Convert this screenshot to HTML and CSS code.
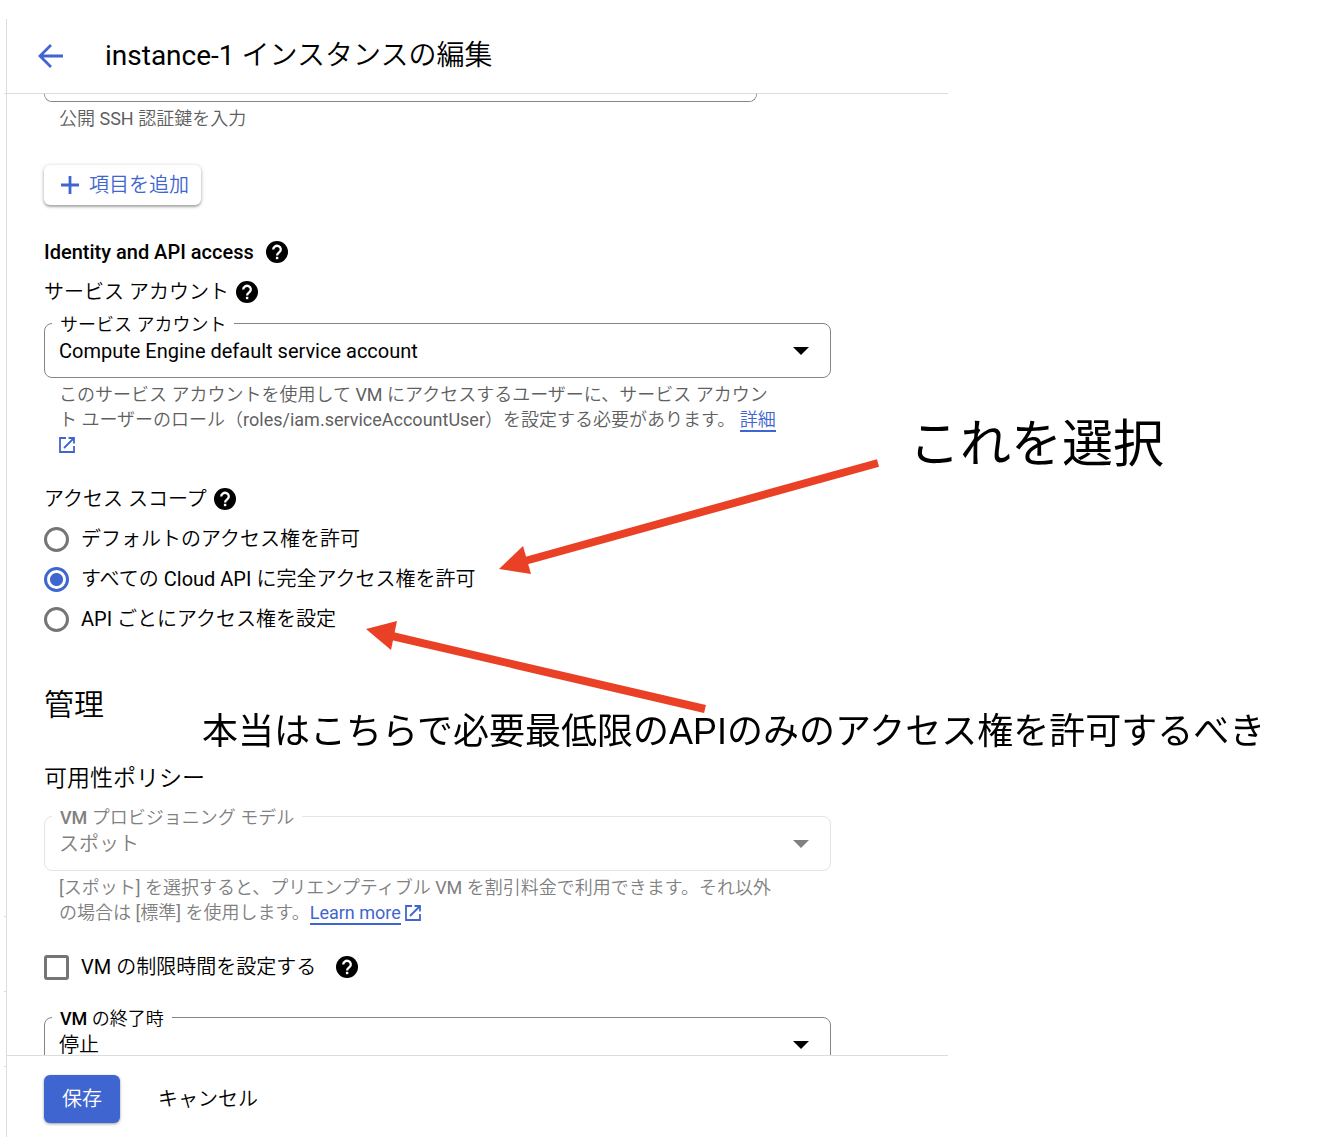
FILE: index.html
```html
<!DOCTYPE html>
<html lang="ja">
<head>
<meta charset="utf-8">
<title>instance-1 インスタンスの編集</title>
<link rel="stylesheet" href="styles.css">
</head>
<body>
<svg class="sprite" aria-hidden="true">
  <symbol id="help" viewBox="0 0 22 22"><circle cx="11" cy="11" r="11" fill="#000"/><path d="M7.200 8.500a3.800 3.600 0 1 1 6.200 2.700c-1.400 1.100-2.300 1.500-2.300 3.200" fill="none" stroke="#fff" stroke-width="2.300"/><rect x="9.900" y="15.800" width="2.400" height="2.400" fill="#fff"/></symbol>
  <symbol id="open" viewBox="0 0 16 16"><path d="M7 1H1v14h14V9M9.500 1H15v5.500M15 1 5 11" fill="none" stroke="currentColor" stroke-width="1.800"/></symbol>
  <symbol id="caret" viewBox="0 0 16 8"><path d="M0 0h16L8 8z" fill="currentColor"/></symbol>
</svg>
<div class="app">
  <main class="panel">
    <header class="topbar">
      <button class="back" type="button" aria-label="戻る"><svg width="26" height="26" viewBox="0 0 26 26"><path d="M26 13H3M14 2 3 13l11 11" fill="none" stroke="currentColor" stroke-width="2.800"/></svg></button>
      <h1>instance-1 インスタンスの編集</h1>
    </header>
    <form class="content">
      <textarea class="key" aria-label="SSH 認証鍵" aria-describedby="key-hint"></textarea>
      <p class="hint" id="key-hint">公開 SSH 認証鍵を入力</p>
      <button class="add" type="button"><svg width="20" height="20" viewBox="0 0 20 20"><path d="M10 1v18M1 10h18" fill="none" stroke="currentColor" stroke-width="2.800"/></svg>項目を追加</button>

      <h4 class="row identity">Identity and API access <svg class="help"><use href="#help"/></svg></h4>
      <div class="row caption">サービス アカウント <svg class="help"><use href="#help"/></svg></div>
      <div class="field account">
        <label for="account">サービス アカウント</label>
        <select id="account"><option>Compute Engine default service account</option></select>
        <svg class="caret"><use href="#caret"/></svg>
      </div>
      <p class="hint">このサービス アカウントを使用して VM にアクセスするユーザーに、サービス アカウン<br>ト ユーザーのロール（roles/iam.serviceAccountUser）を設定する必要があります。 <a href="#">詳細</a><br><svg class="open"><use href="#open"/></svg></p>

      <div class="row caption scope" id="scope">アクセス スコープ <svg class="help"><use href="#help"/></svg></div>
      <div role="radiogroup" aria-labelledby="scope">
        <label class="row choice"><input type="radio" name="scope">デフォルトのアクセス権を許可</label>
        <label class="row choice"><input type="radio" name="scope" checked>すべての Cloud API に完全アクセス権を許可</label>
        <label class="row choice"><input type="radio" name="scope">API ごとにアクセス権を設定</label>
      </div>

      <h2>管理</h2>
      <h3>可用性ポリシー</h3>
      <div class="field disabled model">
        <label for="model"><b>VM</b> プロビジョニング モデル</label>
        <select id="model" disabled><option>スポット</option></select>
        <svg class="caret"><use href="#caret"/></svg>
      </div>
      <p class="hint muted">[スポット] を選択すると、プリエンプティブル VM を割引料金で利用できます。それ以外<br>の場合は [標準] を使用します。<a href="#">Learn more</a> <svg class="open"><use href="#open"/></svg></p>

      <div class="row limit">
        <label class="row choice"><input type="checkbox">VM の制限時間を設定する</label>
        <svg class="help"><use href="#help"/></svg>
      </div>
      <div class="field ending">
        <label for="ending"><b>VM</b> の終了時</label>
        <select id="ending"><option>停止</option></select>
        <svg class="caret"><use href="#caret"/></svg>
      </div>
    </form>
    <footer class="actions">
      <button class="save" type="button">保存</button>
      <button class="cancel" type="button">キャンセル</button>
    </footer>
  </main>
</div>

<svg class="arrows" width="900" height="720" viewBox="0 0 900 720" aria-hidden="true">
  <g stroke="#ea4025" stroke-width="8" fill="#ea4025">
    <path d="M878 463 525 561"/><path d="M499 569 523 546 531 574z" stroke="none"/>
    <path d="M705 709 392 636"/><path d="M366 629 397 621 391 650z" stroke="none"/>
  </g>
</svg>
<p class="note note-pick">これを選択</p>
<p class="note note-ideal">本当はこちらで必要最低限のAPIのみのアクセス権を許可するべき</p>
</body>
</html>
```
FILE: styles.css
```css
* { box-sizing: border-box; }

body {
  margin: 0;
  background: #fff;
  color: #000;
  font: 400 20px/40px Roboto, "Noto Sans CJK JP DemiLight", "Noto Sans CJK JP Light", "Noto Sans CJK JP", sans-serif;
}

h1, h2, h3, h4, p { margin: 0; font-weight: 400; }
button, select, input, textarea { font: inherit; color: inherit; margin: 0; }
svg { flex: none; }
a { color: #3f66d0; text-decoration: none; border-bottom: 2px solid #3f66d0; }

.sprite { position: absolute; width: 0; height: 0; }

/* The left gutter shows the ends of the navigation dividers */
.app {
  height: 100vh;
  padding: 19px 0 1px 6px;
  background:
    linear-gradient(#dadce0, #dadce0) 4px 93px / 2px 1px no-repeat,
    linear-gradient(#dadce0, #dadce0) 4px 916px / 2px 1px no-repeat,
    linear-gradient(#dadce0, #dadce0) 4px 991px / 2px 1px no-repeat,
    linear-gradient(#dadce0, #dadce0) 4px 1066px / 2px 1px no-repeat;
}

.panel {
  display: flex;
  flex-direction: column;
  max-width: 942px;
  height: 100%;
  border-left: 1px solid #dadce0;
}

.topbar {
  display: flex;
  align-items: center;
  gap: 42px;
  flex: none;
  padding: 17px 30px;
  border-bottom: 1px solid #dadce0;
}
.topbar h1 { font-size: 28px; }
.back { display: flex; padding: 0; border: 0; background: none; color: #3f66d0; }

.content {
  flex: 1;
  min-height: 0;
  overflow-y: auto;
  scrollbar-width: none;
  padding: 0 37px;
}

.key {
  display: block;
  width: 713px;
  max-width: 100%;
  height: 8px;
  padding: 0;
  border: 1px solid #80868b;
  border-top: 0;
  border-radius: 0 0 8px 8px;
  resize: none;
}

.hint {
  max-width: 787px;
  padding: 4px 15px 0;
  color: #5f5f5f;
  font-size: 18px;
  line-height: 25px;
}
.muted { color: #808080; }
.open { width: 16px; height: 16px; color: #3f66d0; vertical-align: -2px; }

.add {
  display: flex;
  align-items: center;
  gap: 9px;
  height: 40px;
  margin-top: 34px;
  padding: 0 12px 0 16px;
  border: 0;
  border-radius: 6px;
  background: #fff;
  color: #3f66d0;
  box-shadow: 0 1px 4px rgba(0, 0, 0, .25), 0 2px 2px rgba(0, 0, 0, .2);
}

.row { display: flex; align-items: center; height: 40px; }
.help { width: 22px; height: 22px; }
.identity { gap: 12px; margin-top: 27px; font-weight: 500; }
.caption { gap: 7px; }
.scope { margin-top: 22px; }

.field {
  position: relative;
  max-width: 787px;
  height: 55px;
  border: 1px solid #80868b;
  border-radius: 8px;
}
.field label {
  position: absolute;
  top: -12px;
  left: 7px;
  padding: 0 8px;
  background: #fff;
  font-size: 18px;
  line-height: 26px;
}
.field b { font-weight: 500; }
.field select {
  display: block;
  width: 100%;
  height: 53px;
  padding: 0 14px;
  border: 0;
  border-radius: 8px;
  background: none;
  appearance: none;
}
.caret {
  position: absolute;
  top: 23px;
  right: 21px;
  width: 16px;
  height: 8px;
  pointer-events: none;
}
.account { margin-top: 11px; }
.disabled { border-color: #e4e4e4; color: #808080; }
.disabled select { opacity: 1; }
.model { margin-top: 18px; }
.ending { margin-top: 30px; }

.choice { gap: 12px; }
.choice input {
  width: 25px;
  height: 25px;
  border: 3px solid #757575;
  background: #fff;
  appearance: none;
}
.choice input[type="radio"] { border-radius: 50%; }
.choice input[type="checkbox"] { border-radius: 3px; }
.choice input:checked {
  border-color: #3f66d0;
  background: radial-gradient(circle, #3f66d0 6px, #fff 7px);
}

.content h2 { margin-top: 46px; font-size: 30px; }
.content h3 { margin-top: 34px; font-size: 23px; }
.model { margin-top: 17px; }
.limit { gap: 20px; margin-top: 22px; }

.actions {
  display: flex;
  align-items: flex-start;
  gap: 20px;
  flex: none;
  height: 82px;
  padding: 19px 37px;
  border-top: 1px solid #dadce0;
}
.actions button { height: 48px; padding: 0 18px; border: 0; border-radius: 6px; background: none; }
.actions .save {
  background: #3f66d0;
  color: #fff;
  box-shadow: 0 1px 3px rgba(0, 0, 0, .4);
}

/* Annotations drawn over the form */
.arrows { position: absolute; top: 0; left: 0; pointer-events: none; }
.note {
  position: absolute;
  font-family: "Liberation Sans", "Noto Sans CJK JP", sans-serif;
  white-space: nowrap;
}
.note-pick { top: 415px; left: 909px; font-size: 51px; line-height: 60px; }
.note-ideal { top: 712px; left: 202px; font-size: 36px; line-height: 40px; }
```
